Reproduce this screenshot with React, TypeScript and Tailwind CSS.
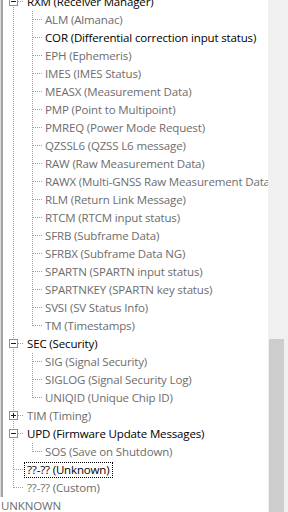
import React from "react";

type Row = {
  level: 1 | 2;
  text: string;
  dark?: boolean;
  box?: "minus" | "plus";
  lastChild?: boolean;
  lastTop?: boolean;
  focus?: boolean;
};

const rows: Row[] = [
  { level: 1, text: "RXM (Receiver Manager)", dark: true, box: "minus" },
  { level: 2, text: "ALM (Almanac)" },
  { level: 2, text: "COR (Differential correction input status)", dark: true },
  { level: 2, text: "EPH (Ephemeris)" },
  { level: 2, text: "IMES (IMES Status)" },
  { level: 2, text: "MEASX (Measurement Data)" },
  { level: 2, text: "PMP (Point to Multipoint)" },
  { level: 2, text: "PMREQ (Power Mode Request)" },
  { level: 2, text: "QZSSL6 (QZSS L6 message)" },
  { level: 2, text: "RAW (Raw Measurement Data)" },
  { level: 2, text: "RAWX (Multi-GNSS Raw Measurement Data)" },
  { level: 2, text: "RLM (Return Link Message)" },
  { level: 2, text: "RTCM (RTCM input status)" },
  { level: 2, text: "SFRB (Subframe Data)" },
  { level: 2, text: "SFRBX (Subframe Data NG)" },
  { level: 2, text: "SPARTN (SPARTN input status)" },
  { level: 2, text: "SPARTNKEY (SPARTN key status)" },
  { level: 2, text: "SVSI (SV Status Info)" },
  { level: 2, text: "TM (Timestamps)", lastChild: true },
  { level: 1, text: "SEC (Security)", dark: true, box: "minus" },
  { level: 2, text: "SIG (Signal Security)" },
  { level: 2, text: "SIGLOG (Signal Security Log)" },
  { level: 2, text: "UNIQID (Unique Chip ID)", lastChild: true },
  { level: 1, text: "TIM (Timing)", box: "plus" },
  { level: 1, text: "UPD (Firmware Update Messages)", dark: true, box: "minus" },
  { level: 2, text: "SOS (Save on Shutdown)", lastChild: true },
  { level: 1, text: "??-?? (Unknown)", dark: true, focus: true },
  { level: 1, text: "??-?? (Custom)", lastTop: true },
];

const LINE = "#a0a0a0";
const X1 = 10.5; // page x 13
const X2 = 29.5; // page x 32

function Gutter({ row }: { row: Row }) {
  const w = row.level === 1 ? 21 : 39;
  const els: React.ReactNode[] = [];
  if (row.level === 1) {
    els.push(
      <line key="v1" x1={X1} y1={0} x2={X1} y2={row.lastTop ? 9 : 18} stroke={LINE} strokeDasharray="1 1" />
    );
    els.push(
      <line key="h1" x1={row.box ? 15 : 11} y1={8.5} x2={21} y2={8.5} stroke={LINE} strokeDasharray="1 1" />
    );
    if (row.box) {
      els.push(<rect key="b" x={6.5} y={4.5} width={8} height={8} fill="#fff" stroke="#919191" />);
      els.push(<line key="m" x1={8} y1={8.5} x2={13} y2={8.5} stroke="#1a1a1a" />);
      if (row.box === "plus")
        els.push(<line key="p" x1={10.5} y1={6} x2={10.5} y2={11} stroke="#1a1a1a" />);
    }
  } else {
    els.push(<line key="v1" x1={X1} y1={0} x2={X1} y2={18} stroke={LINE} strokeDasharray="1 1" />);
    els.push(
      <line key="v2" x1={X2} y1={0} x2={X2} y2={row.lastChild ? 9 : 18} stroke={LINE} strokeDasharray="1 1" />
    );
    els.push(<line key="h2" x1={30} y1={8.5} x2={39} y2={8.5} stroke={LINE} strokeDasharray="1 1" />);
  }
  return (
    <svg width={w} height={18} viewBox={`0 0 ${w} 18`} className="shrink-0" shapeRendering="crispEdges">
      {els}
    </svg>
  );
}

export default function App() {
  return (
    <div
      className="w-[288px] h-[512px] overflow-hidden bg-white flex text-[11.5px] tracking-[-0.15px] leading-[18px]"
      style={{ fontFamily: '"Open Sans", "Noto Sans", sans-serif' }}
    >
      <div className="flex-1 min-w-0 overflow-hidden flex flex-col">
        <div className="-mt-[7px] flex">
          <div className="w-[1px] bg-[#dadada] shrink-0" />
          <div className="w-[2px] bg-[#a3a3a3] shrink-0" />
          <div className="flex-1 min-w-0 flex flex-col">
            {rows.map((r, i) => (
              <div key={i} className="h-[18px] flex items-center whitespace-nowrap">
                <Gutter row={r} />
                <span
                  className={
                    "px-[2px] leading-[14px] border border-dotted " +
                    (r.focus ? "border-black " : "border-transparent ") +
                    (r.dark ? "text-black" : "text-[#6d6d6d]")
                  }
                >
                  {r.text}
                </span>
              </div>
            ))}
          </div>
        </div>
        <div className="h-[18px] flex items-center pl-[1px] text-[#6d6d6d] whitespace-nowrap">UNKNOWN</div>
      </div>
      <div className="w-[20px] shrink-0 bg-[#f0f0f0] flex flex-col">
        <div className="h-[339px] shrink-0" />
        <div className="flex-1 ml-[1px] w-[15px] bg-[#cdcdcd]" />
      </div>
    </div>
  );
}
